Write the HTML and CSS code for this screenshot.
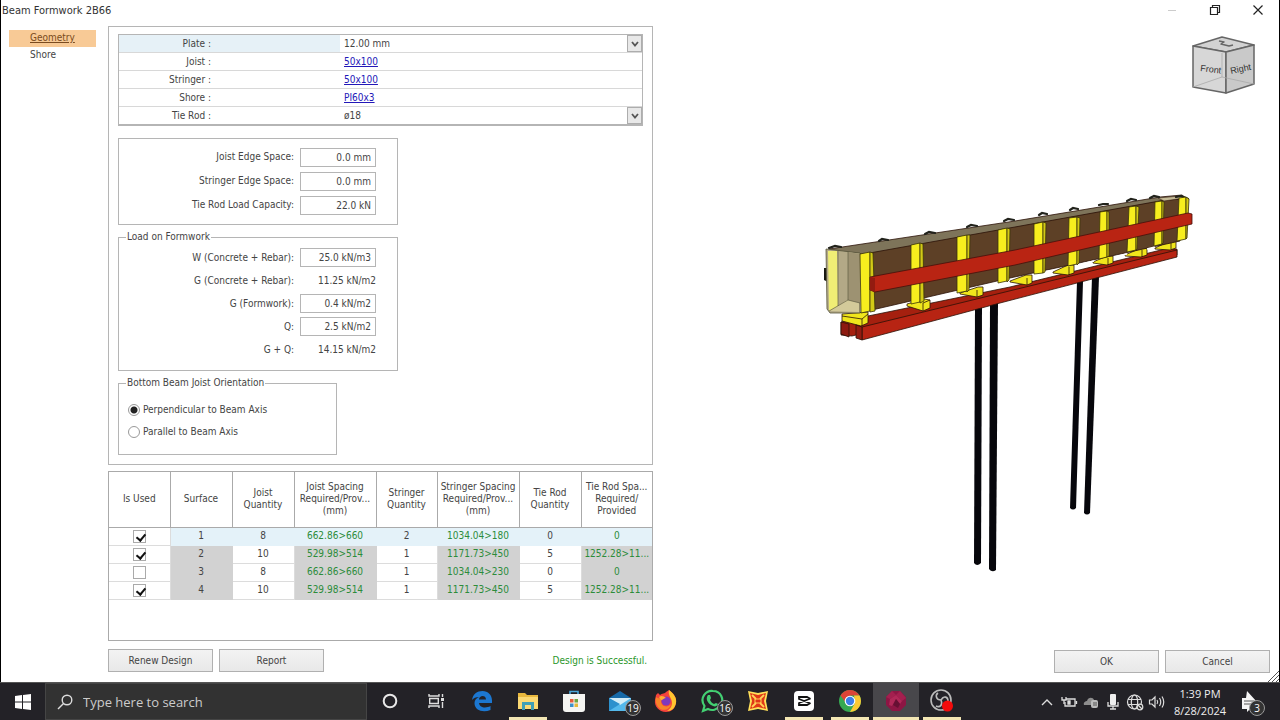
FILE: index.html
```html
<!DOCTYPE html>
<html lang="en">
<head>
<meta charset="utf-8">
<meta name="viewport" content="width=device-width, initial-scale=1">
<title>Beam Formwork 2B66</title>
<link rel="stylesheet" href="styles.css">
</head>
<body>
<div class="window">
  <header class="titlebar">
    <h1 class="title">Beam Formwork 2B66</h1>
    <div class="window-controls">
      <button type="button" class="wc" aria-label="Minimize"><svg width="12" height="12" viewBox="0 0 12 12"><path d="M2 6.500H10" stroke="#ccc"/></svg></button>
      <button type="button" class="wc" aria-label="Restore"><svg width="12" height="12" viewBox="0 0 12 12" fill="none" stroke="#222" stroke-width="1.200"><path d="M1.500 3.500H8.500V10.500H1.500Z M3.500 3.500V1.500H10.500V8.500H8.500"/></svg></button>
      <button type="button" class="wc" aria-label="Close"><svg width="12" height="12" viewBox="0 0 12 12" stroke="#222" stroke-width="1.200"><path d="M1.500 1.500L10.500 10.500M10.500 1.500L1.500 10.500"/></svg></button>
    </div>
  </header>

  <div class="content">
    <nav class="sidebar">
      <a href="#geometry" class="nav-item active">Geometry</a>
      <a href="#shore" class="nav-item">Shore</a>
    </nav>

    <main class="left">
      <section class="panel">
        <div class="props">
          <div class="prop selected"><label class="prop-label" for="plate">Plate :</label>
            <div class="picker"><select id="plate" class="select"><option>12.00 mm</option></select><span class="arrow"><svg width="8" height="6" viewBox="0 0 8 6"><path d="M1 1L4 4.500L7 1" fill="none" stroke="#555" stroke-width="1.800"/></svg></span></div></div>
          <div class="prop"><span class="prop-label">Joist :</span><a class="prop-link" href="#joist">50x100</a></div>
          <div class="prop"><span class="prop-label">Stringer :</span><a class="prop-link" href="#stringer">50x100</a></div>
          <div class="prop"><span class="prop-label">Shore :</span><a class="prop-link" href="#pipe">PI60x3</a></div>
          <div class="prop"><label class="prop-label" for="tie">Tie Rod :</label>
            <div class="picker"><select id="tie" class="select"><option>ø18</option></select><span class="arrow"><svg width="8" height="6" viewBox="0 0 8 6"><path d="M1 1L4 4.500L7 1" fill="none" stroke="#555" stroke-width="1.800"/></svg></span></div></div>
        </div>

        <div class="group spaces">
          <label for="jes">Joist Edge Space:</label><input id="jes" class="field" value="0.0 mm">
          <label for="ses">Stringer Edge Space:</label><input id="ses" class="field" value="0.0 mm">
          <label for="cap">Tie Rod Load Capacity:</label><input id="cap" class="field" value="22.0 kN">
        </div>

        <fieldset class="box">
          <legend>Load on Formwork</legend>
          <div class="loads">
            <label for="w">W (Concrete + Rebar):</label><input id="w" class="field" value="25.0 kN/m3">
            <span>G (Concrete + Rebar):</span><output class="value">11.25 kN/m2</output>
            <label for="g">G (Formwork):</label><input id="g" class="field" value="0.4 kN/m2">
            <label for="q">Q:</label><input id="q" class="field" value="2.5 kN/m2">
            <span>G + Q:</span><output class="value">14.15 kN/m2</output>
          </div>
        </fieldset>

        <fieldset class="box orientation">
          <legend>Bottom Beam Joist Orientation</legend>
          <div class="radios">
            <label class="radio"><input type="radio" name="axis" checked>Perpendicular to Beam Axis</label>
            <label class="radio"><input type="radio" name="axis">Parallel to Beam Axis</label>
          </div>
        </fieldset>
      </section>

      <section class="results">
        <table>
          <colgroup><col class="c-s"><col class="c-m"><col class="c-m"><col class="c-l"><col class="c-s"><col class="c-l"><col class="c-m"><col></colgroup>
          <thead><tr><th>Is Used</th><th>Surface</th><th>Joist<br>Quantity</th><th>Joist Spacing<br>Required/Prov...<br>(mm)</th><th>Stringer<br>Quantity</th><th>Stringer Spacing<br>Required/Prov...<br>(mm)</th><th>Tie Rod<br>Quantity</th><th>Tie Rod Spa...<br>Required/<br>Provided</th></tr></thead>
          <tbody>
            <tr class="current"><td><input type="checkbox" aria-label="Use surface 1" checked></td><td class="calc">1</td><td>8</td><td class="calc ok">662.86&gt;660</td><td>2</td><td class="calc ok">1034.04&gt;180</td><td>0</td><td class="calc ok">0</td></tr>
            <tr><td><input type="checkbox" aria-label="Use surface 2" checked></td><td class="calc">2</td><td>10</td><td class="calc ok">529.98&gt;514</td><td>1</td><td class="calc ok">1171.73&gt;450</td><td>5</td><td class="calc ok">1252.28&gt;11...</td></tr>
            <tr><td><input type="checkbox" aria-label="Use surface 3"></td><td class="calc">3</td><td>8</td><td class="calc ok">662.86&gt;660</td><td>1</td><td class="calc ok">1034.04&gt;230</td><td>0</td><td class="calc ok">0</td></tr>
            <tr><td><input type="checkbox" aria-label="Use surface 4" checked></td><td class="calc">4</td><td>10</td><td class="calc ok">529.98&gt;514</td><td>1</td><td class="calc ok">1171.73&gt;450</td><td>5</td><td class="calc ok">1252.28&gt;11...</td></tr>
          </tbody>
        </table>
      </section>

      <div class="actions">
        <button type="button" class="btn">Renew Design</button>
        <button type="button" class="btn">Report</button>
        <span class="status">Design is Successful.</span>
      </div>
    </main>

    <section class="right">
      <svg class="scene" viewBox="653 26 626 620" role="img" aria-label="3D view of beam formwork">
        <!-- shores -->
        <g fill="#07070c">
          <path d="M975 307H982L981 563Q977 567 974 563Z"/>
          <path d="M990 303H998L996 570Q992 573 989 569Z"/>
          <path d="M1077 281H1083L1076 508Q1073 511 1070 508Z"/>
          <path d="M1092 277H1099L1090 513Q1087 516 1084 513Z"/>
        </g>
        <g stroke="#2b1208" stroke-width=".8" stroke-linejoin="round">
          <!-- rear bottom stringer -->
          <path fill="#a5200f" d="M841 322L868 316L1010 287L1165 249L1177 249V255L852 336L841 335Z"/>
          <path fill="#8d1a10" d="M841 322L849 324V337L841 334Z"/>
          <!-- bottom joists -->
          <g fill="#f0e61c">
            <path d="M842 314L868 312V323L861 326L842 321Z"/><path d="M842 316L862 319V326M862 319L868 314" fill="none"/>
            <path d="M907 304L924 299L930 300V308L923 311L907 306Z"/><path d="M923 303V311M923 303L930 300" fill="none"/>
            <path d="M960 293L978 287L983 287V295L977 297L960 294Z"/><path d="M977 290V297" fill="none"/>
            <path d="M1010 281L1026 275H1032V283L1027 285L1010 282Z"/><path d="M1027 278V285" fill="none"/>
            <path d="M1053 272L1068 265H1074V273L1068 275L1053 273Z"/><path d="M1069 267V275" fill="none"/>
            <path d="M1093 262L1107 256H1113V263L1107 265L1093 263Z"/><path d="M1108 258V265" fill="none"/>
            <path d="M1125 255L1141 248H1147V255L1141 257L1125 256Z"/><path d="M1142 250V257" fill="none"/>
            <path d="M1155 248L1170 241H1176V248L1170 250L1155 249Z"/><path d="M1171 243V249" fill="none"/>
          </g>
          <!-- front bottom stringer -->
          <path fill="#b72413" d="M862 327L1177 250V257L1000 303L862 340Z"/>
          <path fill="#941c11" d="M856 325L862 327V340L856 338Z"/>
          <!-- side plate and concrete -->
          <path fill="#5d4026" d="M868 252L1180 197V241L1010 278L872 310Z"/>
          <path fill="#7e745a" d="M829 249L1015 221L1160 197L1182 195L1187 199L1165 200L1015 227L864 254L838 251Z"/>
          <path fill="#c5ba96" d="M1158 198L1180 196L1184 198L1164 201Z" stroke-width=".5"/>
        </g>
        <g fill="none" stroke="#fff" stroke-width="1.500">
          <path d="M877 311L906 304M932 299L955 293M984 286L998 283M1034 274L1049 271M1082 264L1094 261M1115 257L1127 254M1147 249L1155 247"/>
        </g>
        <!-- top bracing ends -->
        <path fill="none" stroke="#22231c" stroke-width="2.200" stroke-linecap="round" d="M829 248L835 246L841 247M879 241L882 239L888 240M925 234L929 232L935 233M967 227L971 225L977 226M1004 221L1008 219L1014 220M1039 215L1042 213L1047 214M1070 210L1073 208L1078 209M1099 205L1103 204L1108 204M1127 201L1131 199L1136 200M1150 198L1154 196L1159 197M1176 197L1181 196L1188 199"/>
        <!-- end cap -->
        <g stroke="#55543b" stroke-width=".8" stroke-linejoin="round">
          <path fill="#171813" stroke="none" d="M824 268H828V282L824 280Z"/>
          <path fill="#b3a987" d="M826 249L860 253V313H830L827 309Z"/>
          <path fill="#9d9272" stroke="none" d="M848 252L860 254V303L848 300Z"/>
          <path fill="#d3ca9a" stroke="none" d="M830 311L847 300L859 303V312Z"/>
          <path fill="#f0ee75" stroke="none" d="M828 251H837L838 306L829 311Z"/>
          <path fill="none" stroke-width=".6" d="M838 251V306M848 252V300M829 311L848 300L860 303"/>
        </g>
        <!-- side joists -->
        <g stroke="#3a3408" stroke-width=".8" stroke-linejoin="round">
          <g fill="#f7ee1e">
            <path d="M860 254L870 252V311L861 313Z"/><path d="M911 245L920 243V302L911 304Z"/><path d="M957 237L967 235V291L957 293Z"/>
            <path d="M998 230L1007 228V281L998 283Z"/><path d="M1034 224L1043 222V273L1034 274Z"/><path d="M1069 218L1077 217V264L1068 266Z"/>
            <path d="M1100 212L1107 211V257L1099 259Z"/><path d="M1129 207L1136 206V250L1127 252Z"/><path d="M1155 202L1162 201V244L1154 246Z"/><path d="M1179 198L1186 197V239L1177 241Z"/>
          </g>
          <g fill="#d2c916">
            <path d="M870 252L873 253L875 311L870 312Z"/><path d="M920 243L923 244L924 301L920 303Z"/><path d="M967 235H970L969 290L967 292Z"/>
            <path d="M1007 228L1010 229L1009 280L1007 282Z"/><path d="M1043 222L1046 223L1045 272L1043 273Z"/><path d="M1077 217L1080 218L1079 263L1077 265Z"/>
            <path d="M1107 211L1109 212V256L1107 257Z"/><path d="M1136 206L1139 207L1137 249L1136 250Z"/><path d="M1162 201L1164 202L1163 243L1162 244Z"/><path d="M1186 197L1189 199L1187 238L1186 239Z"/>
          </g>
        </g>
        <!-- side stringer -->
        <path fill="#b92413" stroke="#45100b" stroke-width=".8" d="M870 277L1015 250L1188 213L1192 214V224L1015 265L875 292L870 290Z"/>
        <path fill="#931b10" d="M870 277L875 278V292L870 290Z"/>
        <!-- view cube -->
        <g stroke="#666" stroke-width="1.500" stroke-linejoin="round">
          <path fill="#d2d2d2" d="M1193 46L1222 37L1254 45L1226 52Z"/>
          <path fill="#d7d7d7" d="M1193 46L1226 52V93L1193 87Z"/>
          <path fill="#c9c9c9" d="M1226 52L1254 45V84L1226 93Z"/>
          <path fill="none" stroke="#aaa" stroke-width=".8" d="M1193 87L1222 77L1254 84M1222 77V53"/>
          <path fill="none" stroke="#666" d="M1219 41L1224 42L1221 44L1229 46L1233 45"/>
        </g>
        <text class="cube-text" transform="translate(1200 71) rotate(7)">Front</text>
        <text class="cube-text" transform="translate(1231 74) rotate(-12)">Right</text>
      </svg>
      <div class="dialog-buttons">
        <button type="button" class="btn">OK</button>
        <button type="button" class="btn">Cancel</button>
      </div>
      <svg class="grip" width="12" height="12" viewBox="0 0 12 12" stroke="#555"><path d="M1 12L12 1M5 12L12 5M9 12L12 9"/></svg>
    </section>
  </div>
</div>

<footer class="taskbar">
  <button type="button" class="start" aria-label="Start"><svg width="18" height="18" viewBox="0 0 18 18" fill="#fff"><path d="M1 3L8 2V8.500H1ZM9 1.900L17 1V8.500H9ZM1 9.500H8V16L1 15ZM9 9.500H17V17L9 16.100Z"/></svg></button>
  <label class="search">
    <svg width="16" height="16" viewBox="0 0 16 16" fill="none" stroke="#ddd" stroke-width="1.400"><circle cx="10" cy="6" r="4.800"/><path d="M6.500 9.500L1 15"/></svg>
    <input type="text" aria-label="Search" placeholder="Type here to search">
  </label>
  <div class="apps">
    <button type="button" class="app" aria-label="Cortana"><svg width="18" height="18" viewBox="0 0 18 18"><circle cx="9" cy="9" r="6.300" fill="none" stroke="#e8e8e8" stroke-width="2"/></svg></button>
    <button type="button" class="app" aria-label="Task view"><svg width="18" height="18" viewBox="0 0 18 18" fill="none" stroke="#ddd" stroke-width="1.400"><path d="M2 2V4H12V2M2 16V14H12V16M2.700 6.500H11.300V11.500H2.700ZM15.500 2V5M15.500 10V16"/><path d="M14 6H17V9H14Z" fill="#ddd" stroke="none"/></svg></button>
    <button type="button" class="app" aria-label="Edge"><svg width="22" height="22" viewBox="0 0 22 22"><path fill="#1c77d0" d="M1 10C2 4 6 1 11.500 1C17 1 21 5 21 10.500V13H8C8.500 18 15 18.500 19.500 16V20C12 23 3.500 20.500 3.500 13C3.500 10 5.500 8 8 7C5 7 2.500 8 1 10ZM8 9.500H15C15 4.500 8 5 8 9.500Z"/></svg></button>
    <button type="button" class="app running" aria-label="File Explorer"><svg width="22" height="20" viewBox="0 0 22 20"><path fill="#e8b83e" d="M1 2H8L10 4H21V18H1Z"/><path fill="#fbd973" d="M1 6H21V18H1Z"/><path fill="#3f9fb6" d="M5 11H17V19H14V14H8V19H5Z"/></svg></button>
    <button type="button" class="app" aria-label="Store"><svg width="22" height="22" viewBox="0 0 22 22"><path d="M7 5V1.500H15V5" fill="none" stroke="#4aa6d9" stroke-width="1.600"/><path fill="#f5f5f2" d="M0 4H22V19Q22 22 19 22H3Q0 22 0 19Z"/><path fill="#e65c3c" d="M7 9H10.500V12.500H7Z"/><path fill="#6ca645" d="M11.500 9H15V12.500H11.500Z"/><path fill="#3c91cc" d="M7 13.500H10.500V17H7Z"/><path fill="#e7b93b" d="M11.500 13.500H15V17H11.500Z"/></svg></button>
    <button type="button" class="app" aria-label="Mail, 19 unread"><svg width="24" height="22" viewBox="0 0 24 22"><path fill="#176aa8" d="M1 8L12 1L23 8V12H1Z"/><path fill="#54b9ec" d="M1 8H23V21H1Z"/><path fill="#d4edf7" d="M1 8H23L12 15Z"/><path fill="#2d91cd" d="M1 21L12 14L1 8Z"/></svg><span class="badge">19</span></button>
    <button type="button" class="app" aria-label="Firefox"><svg width="24" height="24" viewBox="0 0 24 24"><path fill="#f4433b" d="M2 6L4 4L6 6C8 4 11 5 12 3L15 1C19 4 23 8 22 14C21 20 17 23 12 23C5 23 0 17 1 11Z"/><path fill="#ffc52f" d="M15 1C20 5 23 9 22 14C21 19 18 22 13 22C18 19 19 14 17 10C16 7 14 5 15 1Z"/><path fill="#f78428" d="M2 8C4 10 7 9 10 9L7 12C7 18 14 19 17 15C16 21 8 23 4 18C2 15 1 12 2 8Z"/><circle cx="12" cy="12" r="4.500" fill="#7f38bc"/><path fill="#ffad32" d="M5 8C7 6 10 7 12 9C10 9 9 11 7 11Z"/></svg></button>
    <button type="button" class="app" aria-label="WhatsApp, 16 unread"><svg width="24" height="24" viewBox="0 0 24 24"><path d="M3 22L4.500 17C-1 9 6 1 13 2C21 2 25 11 20 17C17 21 12 22 8 20Z" fill="none" stroke="#43cf72" stroke-width="2.200"/><path fill="#43cf72" d="M8 6L10 6L11 9L10 11C11 13 12 14 14 15L16 14L18 15C17 18 14 18 11 16C8 14 5 10 8 6Z"/></svg><span class="badge">16</span></button>
    <button type="button" class="app" aria-label="Editor"><svg width="22" height="22" viewBox="0 0 22 22"><path fill="#ffe05a" d="M1 1L11 3L21 1L19 11L21 21L11 19L1 21L3 11Z"/><path fill="#e13717" d="M3 3L11 5L19 3L17 11L19 19L11 17L3 19L5 11Z"/><path fill="none" stroke="#ffd257" stroke-width="1.800" d="M5 5L9 9M17 5L13 9M5 17L9 13M17 17L13 13"/><path fill="none" stroke="#ffd257" d="M8 9H14V13H8Z"/></svg></button>
    <button type="button" class="app running" aria-label="CapCut"><svg width="20" height="20" viewBox="0 0 20 20"><rect width="20" height="20" rx="4" fill="#fff"/><path d="M16.500 8L13 6H5V8L16.500 12.500M16.500 12L13 14H5V12L16.500 7.500" fill="none" stroke="#111" stroke-width="1.800"/></svg></button>
    <button type="button" class="app running" aria-label="Chrome"><svg width="24" height="24" viewBox="0 0 24 24"><circle cx="12" cy="12" r="11" fill="#36a852"/><path fill="#dc4437" d="M2.500 6.500A11 11 0 0 1 21.500 6.500H12L8 14Z"/><path fill="#fbc934" d="M21.500 6.500A11 11 0 0 1 12 23L17 14L16 6.500Z"/><circle cx="12" cy="12" r="5.300" fill="#fff"/><circle cx="12" cy="12" r="4.200" fill="#3d7ee8"/></svg></button>
    <button type="button" class="app running focused" aria-label="Beam Formwork"><svg width="22" height="22" viewBox="0 0 22 22"><path fill="#8d1644" d="M7 1H15L21 7V15L15 21H7L1 15V7Z"/><path fill="#a3204f" d="M7 1L11 5L5 9L1 7ZM11 5L15 1L21 8L17 11Z"/><path fill="#b02858" d="M5 9L11 5L17 11L15 14L11 9L7 16L4 15Z"/><path fill="#671033" d="M11 9L15 14L13 18L8 15Z"/></svg></button>
    <button type="button" class="app running" aria-label="OBS Studio"><svg width="24" height="24" viewBox="0 0 24 24"><circle cx="11" cy="11" r="10" fill="#242329" stroke="#bbb" stroke-width="1.600"/><path fill="none" stroke="#bbb" stroke-width="1.600" d="M11 11C6 11 5 6 8 4M11 11C14 6 18 8 18 12M11 11C13 16 10 19 6 17"/><circle cx="17.500" cy="17" r="5.500" fill="#f40b0b"/></svg></button>
  </div>
  <div class="tray">
    <svg width="14" height="18" viewBox="0 0 14 18" fill="none" stroke="#ddd" stroke-width="1.400"><path d="M2 12L7 7L12 12"/></svg>
    <svg width="16" height="18" viewBox="0 0 16 18" fill="none" stroke="#ddd" stroke-width="1.300"><path d="M5 6H14V13H4V9M15.500 8V11"/><path d="M1 4V7H5V4M3 7V11"/><path fill="#ddd" d="M7 8H9V11H7Z"/></svg>
    <svg width="16" height="18" viewBox="0 0 16 18"><path fill="#8d8d8d" d="M1 12C0 9 3 8 4 8C5 4 10 4 11 7C14 7 15 9 14 12Z"/><rect x="8" y="7" width="7" height="8" rx="2" fill="#bbb"/><path d="M11 9V13M13 9V13" stroke="#555"/></svg>
    <svg width="14" height="18" viewBox="0 0 14 18"><rect x="4" y="1" width="6" height="11" rx="1" fill="#eee"/><path d="M2 9V13H12V9M7 13V16M4 16H10" fill="none" stroke="#ddd" stroke-width="1.300"/></svg>
    <svg width="18" height="18" viewBox="0 0 18 18" fill="none" stroke="#ddd" stroke-width="1.200"><circle cx="8.500" cy="9" r="7"/><ellipse cx="8.500" cy="9" rx="3.200" ry="7"/><path d="M2 6.500H15M2 11.500H15"/><circle cx="14" cy="14" r="2.800" fill="#222"/><path d="M12 12L16 16"/></svg>
    <svg width="18" height="18" viewBox="0 0 18 18" fill="none" stroke="#ddd" stroke-width="1.200"><path d="M1.500 7H4L7 4V14L4 11H1.500ZM9 7Q10.500 9 9 11M11.500 5Q14 9 11.500 13M14 3.500Q17.500 9 14 14.500"/></svg>
    <time class="clock"><span>1:39 PM</span><span>8/28/2024</span></time>
    <button type="button" class="notify" aria-label="Notifications, 3 new"><svg width="18" height="22" viewBox="0 0 18 22"><path fill="#f5f5f5" d="M1 7H5L6 0L16 11V18H9L6 21V18H1Z"/><path d="M3 10H13M3 13H13" stroke="#555"/></svg><span class="badge">3</span></button>
  </div>
</footer>
</body>
</html>
```
FILE: styles.css
```css
* { box-sizing: border-box; }
body {
  margin: 0;
  min-height: 100vh;
  display: flex;
  flex-direction: column;
  background: #fff;
  color: #444;
  font: 10px/12px "DejaVu Sans Condensed", "DejaVu Sans", sans-serif;
  font-stretch: condensed;
}
button, input, select { font: inherit; color: inherit; }
.window {
  flex: 1;
  display: flex;
  flex-direction: column;
  border: solid #000;
  border-width: 0 1px;
}
.titlebar { display: flex; justify-content: space-between; height: 26px; }
.title { margin: 4px 0 0 1px; font-size: 11px; line-height: 14px; font-weight: 400; color: #333; }
.window-controls { display: flex; height: 20px; }
.wc { width: 43px; padding: 0; border: 0; background: none; display: flex; align-items: center; justify-content: center; }
.content { flex: 1; display: flex; }

.sidebar { flex: 0 0 107px; padding: 4px 12px 0 8px; }
.nav-item { display: block; padding: 2px 0 3px 21px; color: #444; text-decoration: none; }
.nav-item.active { background: #f8ca96; color: #7a4b20; text-decoration: underline; }

.left { flex: 0 0 545px; display: flex; flex-direction: column; }
.panel { padding: 7px 9px 9px; border: 1px solid #b5b5b5; }
.props { border: 1px solid #b5b5b5; border-bottom-width: 2px; }
.prop { display: grid; grid-template-columns: 221px 1fr; height: 18px; align-items: center; border-bottom: 1px solid #d8d8d8; }
.prop:last-child { height: 17px; border-bottom: 0; }
.prop-label { padding-right: 129px; text-align: right; line-height: 17px; }
.selected .prop-label { background: #e6f1f7; }
.prop-link { padding-left: 4px; color: #2318b8; justify-self: start; }
.picker { display: grid; height: 17px; }
.select { grid-area: 1 / 1; appearance: none; border: 0; padding: 0 4px; background: none; outline: 0; }
.arrow { grid-area: 1 / 1; justify-self: end; width: 15px; display: flex; align-items: center; justify-content: center; border: 1px solid #adadad; background: #e8e8e8; pointer-events: none; }

.group { width: 280px; margin-top: 12px; padding: 8px 21px 9px 0; border: 1px solid #b5b5b5; }
.spaces, .loads { display: grid; grid-template-columns: 1fr 76px; column-gap: 6px; row-gap: 4px; align-items: center; text-align: right; }
.spaces { grid-auto-rows: 20px; }
.loads { grid-auto-rows: 19px; padding-right: 21px; }
.field { width: 76px; height: 19px; padding: 0 4px; border: 1px solid #b5b5b5; background: #fff; text-align: right; }
.box { width: 280px; margin: 6px 0 0; padding: 5px 0 11px; border: 1px solid #b5b5b5; }
.box legend { margin-left: 7px; padding: 0 1px; }
.orientation { width: 219px; }
.radios { display: flex; flex-direction: column; gap: 8px; padding: 9px 9px 4px; }
.radio { display: flex; align-items: center; gap: 3px; height: 14px; }
.radio input { appearance: none; width: 12px; height: 12px; margin: 0; border: 1px solid #999; border-radius: 50%; }
.radio input:checked { background: radial-gradient(circle, #222 0 3px, #fff 4px); }

.results { height: 170px; margin-top: 6px; border: 1px solid #aaa; }
table { width: 100%; table-layout: fixed; border-collapse: collapse; text-align: center; }
.c-s { width: 61px; }
.c-m { width: 62px; }
.c-l { width: 82px; }
th { height: 55px; padding: 0; font-weight: 400; border-right: 1px solid #aaa; border-bottom: 1px solid #aaa; white-space: nowrap; }
td { height: 18px; padding: 0; border-bottom: 1px solid #dcdcdc; border-right: 1px solid #dcdcdc; white-space: nowrap; line-height: 12px; }
th:last-child, td:last-child { border-right: 0; }
.calc { background: #d2d2d2; border-color: #d2d2d2; }
.current td:not(:first-child) { background: #e4f2f9; border-color: #e4f2f9; }
.ok { color: #2c8c3a; }
td input { appearance: none; display: block; width: 13px; height: 13px; margin: 0 auto; border: 1px solid #aaa; background: #fff; }
td input:checked::before { content: ""; display: block; width: 4px; height: 7px; margin: 1px 0 0 4px; border: solid #111; border-width: 0 2px 2px 0; transform: rotate(40deg); }

.actions { display: flex; gap: 6px; margin-top: 8px; align-items: center; }
.btn { width: 105px; height: 23px; padding: 0; border: 1px solid #b0b0b0; background: linear-gradient(#f3f3f3, #e8e8e8); }
.status { margin-left: auto; padding-right: 6px; color: #2a962a; }

.right { flex: 1; min-width: 0; display: flex; flex-direction: column; position: relative; }
.scene { display: block; width: 100%; flex: 0 0 620px; }
.cube-text { font: 9px "Liberation Sans", sans-serif; fill: #333; }
.dialog-buttons { display: flex; justify-content: flex-end; gap: 6px; padding: 4px 9px 0 0; }
.grip { position: absolute; right: 0; bottom: 0; }

.taskbar { height: 38px; display: flex; background: #232227; color: #eee; font-family: "Open Sans", "Noto Sans", sans-serif; font-stretch: normal; border-top: 1px solid #555; }
.start, .app, .notify { border: 0; padding: 0; background: none; display: flex; align-items: center; justify-content: center; position: relative; }
.start { width: 45px; }
.search { display: flex; align-items: center; width: 322px; padding-left: 11px; gap: 10px; background: #323232; border: 1px solid #454545; }
.search input { flex: 1; min-width: 0; border: 0; padding: 0; background: none; outline: 0; font-size: 13px; line-height: 18px; }
.search input::placeholder { color: #ccc; opacity: 1; }
.apps { display: flex; }
.app { width: 46px; padding-top: 2px; border-bottom: 3px solid transparent; }
.running { background: linear-gradient(#f3e6b3, #f3e6b3) center bottom / 38px 3px no-repeat; background-origin: border-box; }
.focused { background: linear-gradient(#f3e6b3, #f3e6b3) center bottom / 46px 3px no-repeat border-box, #48474b; }
.badge { position: absolute; right: 2px; bottom: 1px; width: 16px; height: 16px; border: 1px solid #999; border-radius: 50%; background: #333; color: #fff; font-size: 10px; line-height: 14px; text-align: center; }
.tray { display: flex; align-items: center; margin-left: auto; padding-right: 12px; }
.tray > svg { width: 22px; }
.clock { width: 64px; display: flex; flex-direction: column; text-align: center; font-size: 11px; line-height: 17px; }
.notify { width: 36px; height: 36px; }
.notify .badge { right: 3px; bottom: 4px; }
```
